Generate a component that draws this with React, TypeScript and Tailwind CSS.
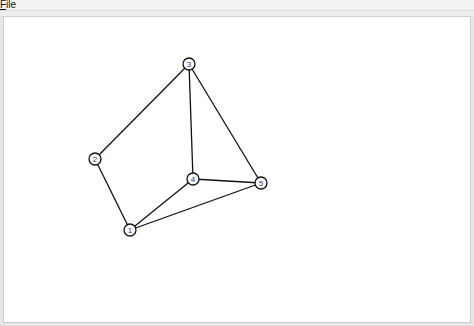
import React from "react";

const nodes = [
  { id: 1, x: 129, y: 230 },
  { id: 2, x: 94, y: 159 },
  { id: 3, x: 188, y: 64 },
  { id: 4, x: 192, y: 179 },
  { id: 5, x: 260, y: 183 },
];

const edges: [number, number][] = [
  [3, 2],
  [3, 4],
  [3, 5],
  [2, 1],
  [1, 4],
  [1, 5],
  [4, 5],
];

const pos = (id: number) => nodes.find((n) => n.id === id)!;

const App = () => {
  return (
    <div
      className="w-[474px] h-[326px] bg-[#e6e6e6] flex flex-col"
      style={{ fontFamily: '"Liberation Sans", Arial, sans-serif' }}
    >
      <div className="h-[11px] bg-[#f2f2f2] border-b border-[#d9d9d9] flex items-center">
        <span className="text-[10px] leading-none text-[#111]">
          <span className="underline">F</span>ile
        </span>
      </div>
      <div className="h-[5px] bg-[#ededed]" />
      <div className="flex-1 px-[3px] pb-[3px] flex">
        <div className="flex-1 bg-white border border-[#cfcfcf]">
          <svg width="466" height="304" viewBox="3 17 466 304">
            {edges.map(([a, b]) => (
              <line
                key={`${a}-${b}`}
                x1={pos(a).x}
                y1={pos(a).y}
                x2={pos(b).x}
                y2={pos(b).y}
                stroke="#111"
                strokeWidth={1.3}
              />
            ))}
            {nodes.map((n) => (
              <g key={n.id}>
                <circle cx={n.x} cy={n.y} r={6} fill="white" stroke="#111" strokeWidth={1.3} />
                <text
                  x={n.x}
                  y={n.y + 2.8}
                  textAnchor="middle"
                  fontSize="8"
                  fill="#33336b"
                  fontFamily='"Liberation Sans", Arial, sans-serif'
                >
                  {n.id}
                </text>
              </g>
            ))}
          </svg>
        </div>
      </div>
    </div>
  );
};

export default App;
